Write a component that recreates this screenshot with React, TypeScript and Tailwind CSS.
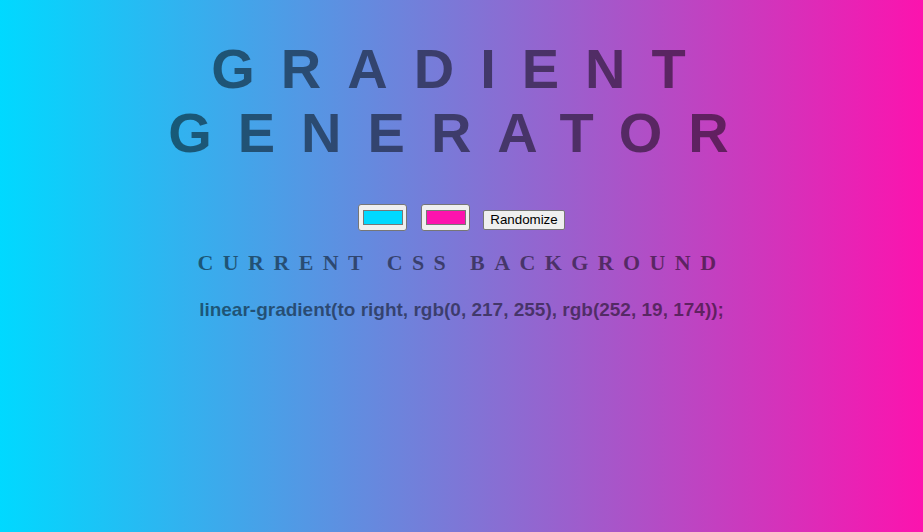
import { useState } from "react";

const ColorSwatch = ({ color }: { color: string }) => (
  <div className="w-[49px] h-[27px] bg-[#efefef] border border-[#767676] rounded-[3px] flex items-center justify-center">
    <div
      className="w-[40px] h-[15px] border border-[#777777]"
      style={{ backgroundColor: color }}
    />
  </div>
);

export default function App() {
  const [colors] = useState(["rgb(0, 217, 255)", "rgb(252, 19, 174)"]);
  const css = `linear-gradient(to right, ${colors[0]}, ${colors[1]});`;

  return (
    <div
      className="min-h-screen w-full text-center text-black/50"
      style={{ background: css.slice(0, -1) }}
    >
      <h1 className="pt-[37px] font-['Liberation_Sans',Arial,sans-serif] font-bold text-[56px] leading-[64px] tracking-[26px]">
        GRADIENT
        <br />
        GENERATOR
      </h1>

      <div className="mt-[39px] flex justify-center items-end">
        <ColorSwatch color={colors[0]} />
        <div className="ml-[14px]">
          <ColorSwatch color={colors[1]} />
        </div>
        <button className="ml-[13px] mb-[1px] w-[82px] h-[20px] bg-[#efefef] border border-[#767676] rounded-[2px] text-black text-[13.33px] leading-none font-['Liberation_Sans',Arial,sans-serif]">
          Randomize
        </button>
      </div>

      <h3 className="mt-[19px] font-['Liberation_Serif','Times_New_Roman',serif] font-bold text-[22px] leading-[25px] tracking-[9.4px]">
        CURRENT CSS BACKGROUND
      </h3>

      <h3 className="mt-[24px] font-['Liberation_Sans',Arial,sans-serif] font-bold text-[19px] leading-[22px]">
        {css}
      </h3>
    </div>
  );
}
